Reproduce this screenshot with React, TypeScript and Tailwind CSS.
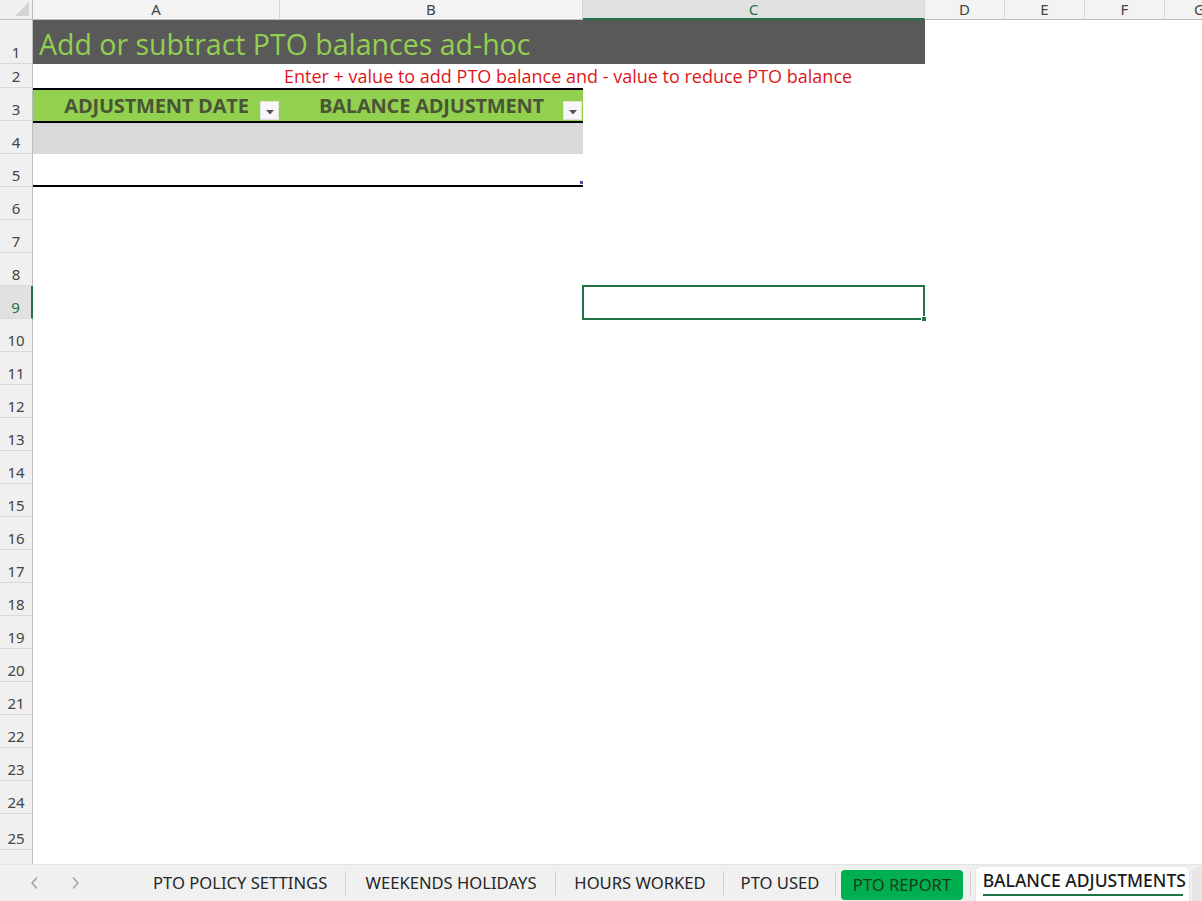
import React from "react";

const GRID = "grid grid-cols-[247px_303px_342px_80px_80px_80px_1fr] flex-1 min-w-0";

function RowHeader({ n, selected }: { n?: number; selected?: boolean }) {
  return (
    <div
      className={
        "w-[33px] shrink-0 flex items-end justify-center pb-[1px] text-[15px] leading-[20px] border-b border-[#d9d9d9] " +
        (selected
          ? "bg-[#e1e1e1] text-[#217346] border-r-2 border-r-[#217346]"
          : "bg-[#f0f0f0] text-[#444] border-r border-r-[#bcbcbc]")
      }
      style={{ fontFamily: "'Noto Sans', 'Open Sans', sans-serif" }}
    >
      {n}
    </div>
  );
}

function Dropdown() {
  return (
    <div className="absolute right-[1px] bottom-[1px] w-[19px] h-[19px] bg-[#f7f7f7] border border-[#e2e2e2] flex items-center justify-center">
      <svg width="8" height="5" viewBox="0 0 8 5" className="mt-[3px]">
        <path d="M0 0 L8 0 L4 4.5 Z" fill="#555" />
      </svg>
    </div>
  );
}

const colHeaders: { label: string; w: string; sel?: boolean }[] = [
  { label: "A", w: "w-[247px]" },
  { label: "B", w: "w-[303px]" },
  { label: "C", w: "w-[342px]", sel: true },
  { label: "D", w: "w-[80px]" },
  { label: "E", w: "w-[80px]" },
  { label: "F", w: "w-[80px]" },
  { label: "G", w: "w-[70px]" },
];

export default function App() {
  const font = { fontFamily: "'Open Sans', 'Noto Sans', sans-serif" };
  const plainRows = Array.from({ length: 19 }, (_, i) => i + 6); // 6..24
  return (
    <div className="w-[1202px] h-[901px] bg-white overflow-hidden flex flex-col" style={font}>
      {/* Sheet */}
      <div className="h-[864px] overflow-hidden flex flex-col">
        {/* column headers */}
        <div className="flex h-[20px] shrink-0">
          <div className="w-[33px] shrink-0 bg-[#f0f0f0] border-r border-b border-[#bcbcbc] flex items-end justify-end p-[3px]">
            <svg width="14" height="14" viewBox="0 0 14 14">
              <path d="M14 0 L14 14 L0 14 Z" fill="#d3d3d3" />
            </svg>
          </div>
          <div className="flex flex-1 overflow-hidden">
            {colHeaders.map((c) => (
              <div
                key={c.label}
                className={
                  c.w +
                  " shrink-0 flex items-center justify-center text-[15px] leading-none border-r border-[#d4d4d4] " +
                  (c.sel
                    ? "bg-[#e1e1e1] text-[#217346] border-b-2 border-b-[#217346]"
                    : "bg-[#f3f3f3] text-[#444] border-b border-b-[#bcbcbc]")
                }
                style={{ fontFamily: "'Noto Sans', 'Open Sans', sans-serif" }}
              >
                {c.label}
              </div>
            ))}
          </div>
        </div>

        {/* row 1 */}
        <div className="flex h-[44px] shrink-0">
          <RowHeader n={1} />
          <div className={GRID}>
            <div className="col-span-3 bg-[#595959] flex items-end pl-[6px] pb-[1px]">
              <span className="text-[28.5px] leading-[38px] text-[#92d050] whitespace-nowrap">
                Add or subtract PTO balances ad-hoc
              </span>
            </div>
          </div>
        </div>

        {/* row 2 */}
        <div className="flex h-[24px] shrink-0">
          <RowHeader n={2} />
          <div className={GRID}>
            <div />
            <div className="relative">
              <span className="absolute left-[4px] bottom-[0px] text-[18px] leading-[24px] text-[#e0161b] whitespace-nowrap">
                Enter + value to add PTO balance and - value to reduce PTO balance
              </span>
            </div>
          </div>
        </div>

        {/* row 3 */}
        <div className="flex h-[33px] shrink-0">
          <RowHeader n={3} />
          <div className={GRID}>
            <div className="relative bg-[#92d050] border-y-2 border-black flex items-center justify-center">
              <span className="text-[20px] font-bold text-[#4a5535] whitespace-nowrap tracking-[-0.2px] mt-[1px]">
                ADJUSTMENT DATE
              </span>
              <Dropdown />
            </div>
            <div className="relative bg-[#92d050] border-y-2 border-black flex items-center justify-center">
              <span className="text-[20px] font-bold text-[#4a5535] whitespace-nowrap tracking-[-0.2px] mt-[1px]">
                BALANCE ADJUSTMENT
              </span>
              <Dropdown />
            </div>
          </div>
        </div>

        {/* row 4 */}
        <div className="flex h-[33px] shrink-0">
          <RowHeader n={4} />
          <div className={GRID}>
            <div className="col-span-2 bg-[#d9d9d9]" />
          </div>
        </div>

        {/* row 5 */}
        <div className="flex h-[33px] shrink-0">
          <RowHeader n={5} />
          <div className={GRID}>
            <div className="col-span-2 relative border-b-2 border-black">
              <div className="absolute right-0 bottom-[1px] w-[3px] h-[3px] bg-[#4a55a0]" />
            </div>
          </div>
        </div>

        {plainRows.map((n) => (
          <div key={n} className="flex h-[33px] shrink-0">
            <RowHeader n={n} selected={n === 9} />
            <div className={GRID}>
              {n === 9 && (
                <>
                  <div />
                  <div />
                  <div className="relative border-2 border-[#217346] -ml-[1px] -mt-[1px] mb-[-1px]">
                    <div className="absolute -right-[4px] -bottom-[4px] w-[6px] h-[6px] bg-[#217346] border border-white" />
                  </div>
                </>
              )}
            </div>
          </div>
        ))}

        {/* row 25 */}
        <div className="flex h-[36px] shrink-0">
          <RowHeader n={25} />
          <div className={GRID} />
        </div>
        <div className="flex flex-1">
          <div className="w-[33px] shrink-0 bg-[#f0f0f0] border-r border-[#bcbcbc]" />
        </div>
      </div>

      {/* Tab bar */}
      <div
        className="h-[37px] shrink-0 bg-[#f0f0f0] border-t border-[#e4e4e4] flex items-stretch text-[16.6px] text-[#262626]"
        style={{ fontFamily: "'Noto Sans', 'Open Sans', sans-serif" }}
      >
        <div className="w-[145px] shrink-0 flex items-center">
          <span className="ml-[30px]">
            <svg width="10" height="14" viewBox="0 0 10 14">
              <path d="M7 1.5 L2 7 L7 12.5" fill="none" stroke="#9a9a9a" strokeWidth="1.3" />
            </svg>
          </span>
          <span className="ml-[30px]">
            <svg width="10" height="14" viewBox="0 0 10 14">
              <path d="M3 1.5 L8 7 L3 12.5" fill="none" stroke="#9a9a9a" strokeWidth="1.3" />
            </svg>
          </span>
        </div>
        <div className="flex items-center pl-[8px] whitespace-nowrap">
          <span className="w-[174px] text-center">PTO POLICY SETTINGS</span>
          <span className="mx-[18px] w-px h-[24px] bg-[#cfcfcf]" />
          <span className="w-[174px] text-center">WEEKENDS HOLIDAYS</span>
          <span className="mx-[17px] w-px h-[24px] bg-[#cfcfcf]" />
          <span className="w-[134px] text-center">HOURS WORKED</span>
          <span className="mx-[16px] w-px h-[24px] bg-[#cfcfcf]" />
          <span className="w-[80px] text-center">PTO USED</span>
          <span className="ml-[15px] mr-[5px] w-px h-[24px] bg-[#cfcfcf]" />
          <span className="h-[30px] mt-[4px] w-[122px] flex items-center justify-center bg-[#00b050] rounded-[4px] text-[#1c3a1c]">
            PTO REPORT
          </span>
          <span className="ml-[7px] w-px h-[24px] bg-[#cfcfcf]" />
        </div>
        <div className="ml-[4px] mt-[1px] w-[221px] bg-white rounded-t-[6px] border border-b-0 border-[#e6e6e6] flex flex-col items-center justify-center">
          <span className="text-[#1a1a1a] text-[17.5px] font-medium leading-[22px] mt-[-4px] whitespace-nowrap w-[200px] text-center">
            BALANCE ADJUSTMENTS
          </span>
          <span className="mt-[3px] h-[2px] w-[200px] bg-[#217346]" />
        </div>
        <div className="ml-[2px] mt-[2px] w-[10px] bg-[#e6e6e6] rounded-tl-[6px]" />
      </div>
    </div>
  );
}
